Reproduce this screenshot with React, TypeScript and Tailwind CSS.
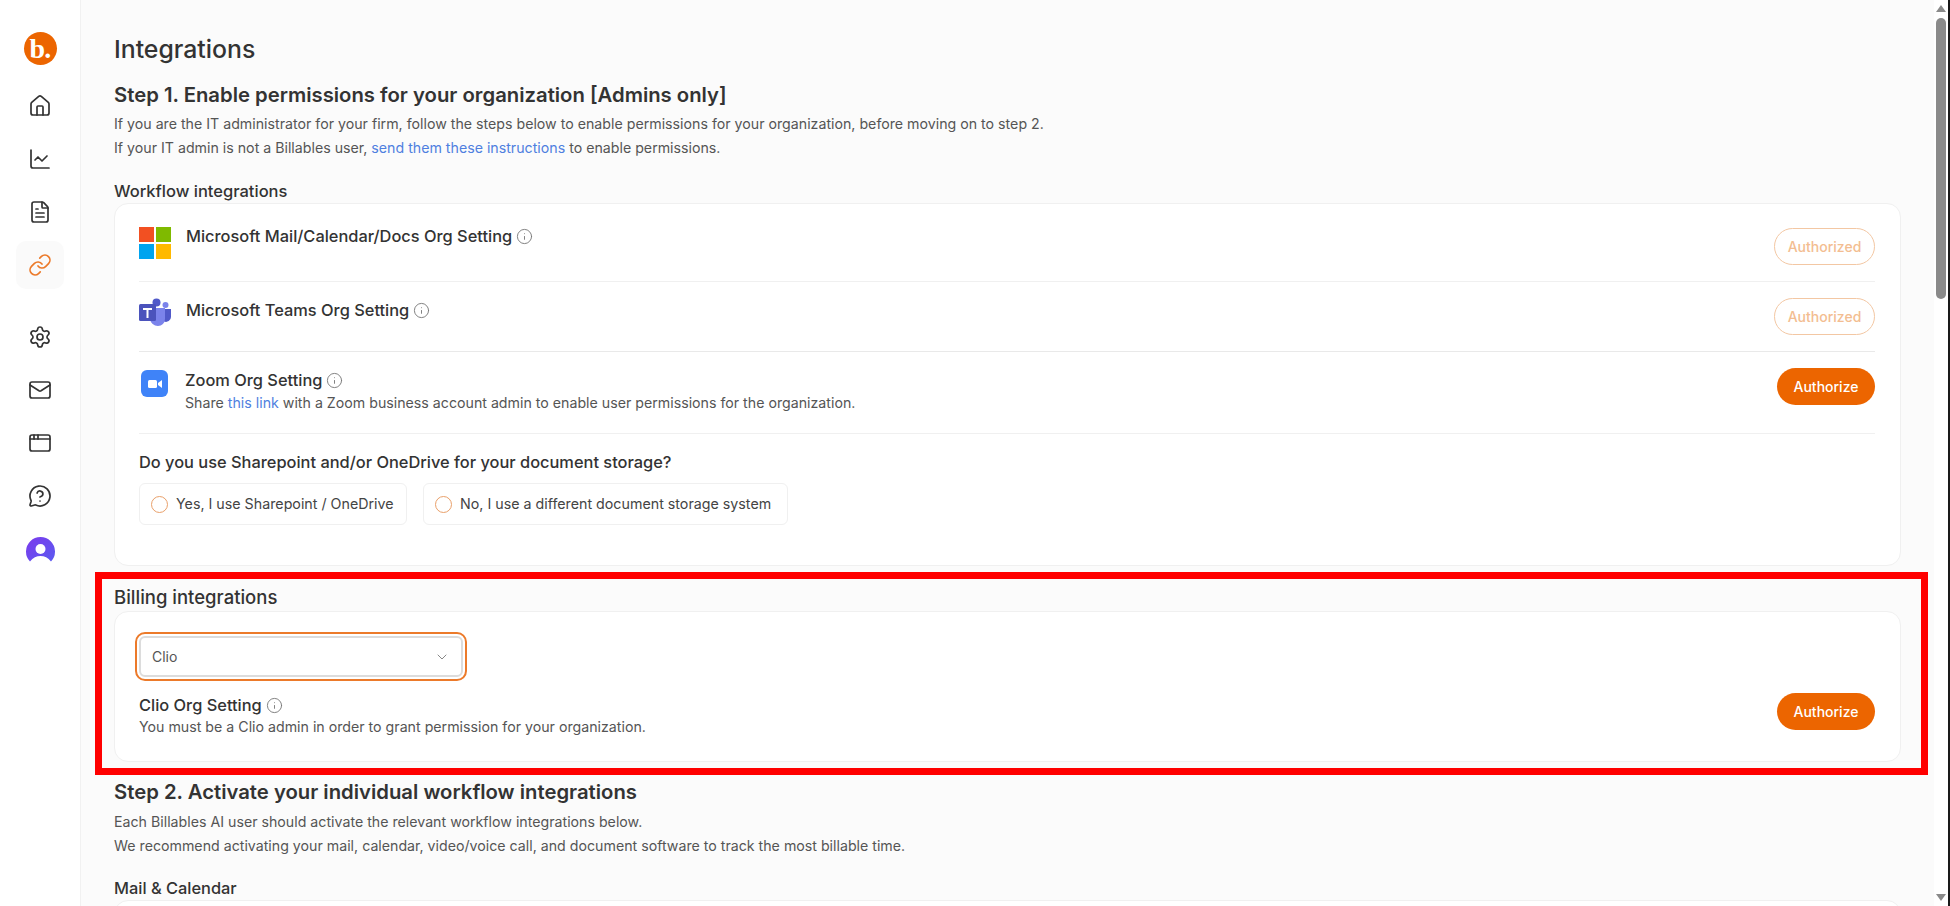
import { House, ChartLine, FileText, Link, Settings, Mail, AppWindow, MessageCircleQuestion, Info, ChevronDown } from "lucide-react";

function InfoDot() {
  return <Info className="ml-[4px] inline-block h-[17px] w-[17px] text-[#777]" strokeWidth={1.3} />;
}

function Title({ children }: { children: React.ReactNode }) {
  return (
    <div className="flex items-center text-[16.4px] leading-6 font-medium text-[#333]">
      {children}
      <InfoDot />
    </div>
  );
}

function Outline() {
  return (
    <div className="flex h-[37px] w-[101px] items-center justify-center rounded-full border border-[#f3c7a3] bg-white text-sm font-medium text-[#f3bd91]">
      Authorized
    </div>
  );
}

function Solid() {
  return (
    <div className="flex h-[37px] w-[98px] items-center justify-center rounded-full bg-[#ec6500] text-sm font-medium text-white">
      Authorize
    </div>
  );
}

function MsLogo() {
  return (
    <div className="grid h-[32px] w-[32px] grid-cols-2 gap-[2px]">
      <div className="bg-[#f25022]" />
      <div className="bg-[#7fba00]" />
      <div className="bg-[#00a4ef]" />
      <div className="bg-[#ffb900]" />
    </div>
  );
}

function TeamsLogo() {
  return (
    <svg width="32" height="28" viewBox="0 0 32 28">
      <circle cx="17.5" cy="4.5" r="4" fill="#5059c9" />
      <circle cx="26.5" cy="7" r="3" fill="#7b83eb" />
      <path d="M21 11h11v8a5 5 0 0 1-7 4.500z" fill="#5059c9" />
      <path d="M11 10h15v11a7 7 0 0 1-7 7 8 8 0 0 1-8-7z" fill="#7b83eb" />
      <rect x="0" y="6" width="17" height="17" rx="1.500" fill="#4b53bc" />
      <path d="M4 10h9v2h-3.500v8h-2v-8H4z" fill="#fff" />
    </svg>
  );
}

function ZoomLogo() {
  return (
    <div className="mt-[2px] ml-[2px] flex h-[27px] w-[27px] items-center justify-center rounded-[6px] bg-[#3f83f8]">
      <svg width="14" height="10" viewBox="0 0 14 10">
        <rect x="0" y="1" width="9" height="8" rx="1.500" fill="#fff" />
        <path d="M10 4l4-3v8l-4-3z" fill="#fff" />
      </svg>
    </div>
  );
}

function Avatar() {
  return (
    <svg width="29" height="26" viewBox="0 0 29 26">
      <defs>
        <linearGradient id="av" x1="0" y1="0" x2="1" y2="1">
          <stop offset="0" stopColor="#7c3aed" />
          <stop offset="1" stopColor="#5b5bf0" />
        </linearGradient>
      </defs>
      <path d="M4 25.500A14.500 14.500 0 1 1 25 25.500C22 21.500 18.500 20 14.500 20S7 21.500 4 25.500z" fill="url(#av)" />
      <circle cx="14.500" cy="13" r="5" fill="#fff" />
    </svg>
  );
}

function NavIcon({ children, active }: { children: React.ReactNode; active?: boolean }) {
  return (
    <div className={`flex h-[48px] w-[48px] items-center justify-center rounded-[10px] ${active ? "bg-[#fafafa]" : ""}`}>
      {children}
    </div>
  );
}

const iconCls = "h-[24px] w-[24px] text-[#333]";

function Sidebar() {
  return (
    <aside className="flex w-[81px] shrink-0 flex-col items-center border-r border-[#f1f1f1] bg-white pt-[32px]">
      <div className="flex h-[33px] w-[33px] items-center justify-center rounded-full bg-[#ec6500] font-['Liberation_Serif',serif] text-[28px] leading-none font-bold tracking-tight text-white">
        b.
      </div>
      <div className="mt-[17px] flex flex-col gap-[5px]">
        <NavIcon><House className={iconCls} strokeWidth={1.7} /></NavIcon>
        <NavIcon><ChartLine className={iconCls} strokeWidth={1.7} /></NavIcon>
        <NavIcon><FileText className={iconCls} strokeWidth={1.7} /></NavIcon>
        <NavIcon active><Link className="h-[24px] w-[24px] text-[#ec7a2a]" strokeWidth={1.7} /></NavIcon>
      </div>
      <div className="mt-[24px] flex flex-col gap-[5px]">
        <NavIcon><Settings className={iconCls} strokeWidth={1.7} /></NavIcon>
        <NavIcon><Mail className={iconCls} strokeWidth={1.7} /></NavIcon>
        <NavIcon><AppWindow className={iconCls} strokeWidth={1.7} /></NavIcon>
        <NavIcon><MessageCircleQuestion className={iconCls} strokeWidth={1.7} /></NavIcon>
        <NavIcon><Avatar /></NavIcon>
      </div>
    </aside>
  );
}

function Radio({ label, width }: { label: string; width: string }) {
  return (
    <div className={`flex h-[42px] items-center gap-[8px] rounded-[6px] border border-[#f0f0f0] bg-white pl-[11px] text-[14.25px] text-[#444] ${width}`}>
      <span className="h-[17px] w-[17px] rounded-full border-[1.5px] border-[#e9a06a]" />
      {label}
    </div>
  );
}

function Scrollbar() {
  return (
    <div className="flex w-[16px] shrink-0 flex-col items-center bg-white pt-[5px] pr-[2px] shadow-[inset_-2px_0_0_#1a1a1a]">
      <div className="h-0 w-0 border-x-[5px] border-b-[7px] border-x-transparent border-b-[#8a8a8a]" />
      <div className="mt-[6px] h-[281px] w-[10px] rounded-full bg-[#8a8a8a]" />
      <div className="mt-auto mb-[5px] h-0 w-0 border-x-[5px] border-t-[7px] border-x-transparent border-t-[#8a8a8a]" />
    </div>
  );
}

export default function App() {
  return (
    <div className="flex h-[906px] w-full overflow-hidden bg-[#fbfbfb] font-['Inter',sans-serif] text-[#333]">
      <Sidebar />
      <main className="relative min-w-0 flex-1 overflow-hidden pt-[32px] pr-[33px] pl-[33px]">
        <h1 className="text-[24.8px] leading-[34px] font-medium text-[#333]">Integrations</h1>
        <h2 className="mt-[15px] text-[20.3px] leading-7 font-semibold text-[#333]">Step 1. Enable permissions for your organization [Admins only]</h2>
        <p className="mt-[3px] text-[14.2px] leading-6 text-[#555]">If you are the IT administrator for your firm, follow the steps below to enable permissions for your organization, before moving on to step 2.</p>
        <p className="text-[14.2px] leading-6 text-[#555]">
          If your IT admin is not a Billables user, <span className="text-[#4f7fe0]">send them these instructions</span> to enable permissions.
        </p>
        <h3 className="mt-[19px] text-[16.5px] leading-6 font-medium text-[#333]">Workflow integrations</h3>

        <section className="h-[363px] rounded-[14px] border border-[#f0f0f0] bg-white pr-[25px] pl-[24px]">
          <div className="flex h-[78px] items-start justify-between border-b border-[#f0f0f0] pt-[23px]">
            <div className="flex items-start gap-[15px]">
              <MsLogo />
              <div className="-mt-[3px]"><Title>Microsoft Mail/Calendar/Docs Org Setting</Title></div>
            </div>
            <div className="mt-[1px]"><Outline /></div>
          </div>
          <div className="flex h-[70px] items-start justify-between border-b border-[#e9e9e9] pt-[16px]">
            <div className="flex items-start gap-[15px]">
              <TeamsLogo />
              <Title>Microsoft Teams Org Setting</Title>
            </div>
            <Outline />
          </div>
          <div className="flex h-[82px] items-start justify-between border-b border-[#f0f0f0] pt-[16px]">
            <div className="flex items-start gap-[17px]">
              <ZoomLogo />
              <div>
                <Title>Zoom Org Setting</Title>
                <p className="mt-[1px] text-[14.2px] leading-5 text-[#555]">
                  Share <span className="text-[#4f7fe0]">this link</span> with a Zoom business account admin to enable user permissions for the organization.
                </p>
              </div>
            </div>
            <Solid />
          </div>
          <p className="mt-[16px] text-[16.4px] leading-6 font-medium text-[#333]">Do you use Sharepoint and/or OneDrive for your document storage?</p>
          <div className="mt-[9px] flex gap-[16px]">
            <Radio label="Yes, I use Sharepoint / OneDrive" width="w-[268px]" />
            <Radio label="No, I use a different document storage system" width="w-[365px]" />
          </div>
        </section>

        <h3 className="mt-[19px] text-[18.5px] leading-6 font-medium text-[#333]">Billing integrations</h3>
        <section className="mt-[2px] flex h-[151px] items-start justify-between rounded-[14px] border border-[#f0f0f0] bg-white pr-[25px] pl-[24px]">
          <div className="flex flex-col">
            <div className="mt-[24px] flex h-[41px] w-[324px] items-center justify-between rounded-[6px] border-2 border-[#dcdcdc] bg-white px-[11px] text-sm text-[#555] outline-2 outline-offset-2 outline-[#ec7a2a]">
              Clio
              <ChevronDown className="h-[16px] w-[16px] text-[#888]" strokeWidth={1.5} />
            </div>
            <div className="mt-[16px]"><Title>Clio Org Setting</Title></div>
            <p className="text-[14.2px] leading-5 text-[#555]">You must be a Clio admin in order to grant permission for your organization.</p>
          </div>
          <div className="mt-[81px]"><Solid /></div>
        </section>

        <h2 className="mt-[16px] text-[20.3px] leading-7 font-semibold text-[#333]">Step 2. Activate your individual workflow integrations</h2>
        <p className="mt-[4px] text-[14.2px] leading-6 text-[#555]">Each Billables AI user should activate the relevant workflow integrations below.</p>
        <p className="text-[14.2px] leading-6 text-[#555]">We recommend activating your mail, calendar, video/voice call, and document software to track the most billable time.</p>
        <h3 className="mt-[18px] text-[16.4px] leading-6 font-medium text-[#333]">Mail &amp; Calendar</h3>
        <section className="h-[120px] rounded-[14px] border border-[#f0f0f0] bg-white" />

        <div className="pointer-events-none absolute top-[572px] left-[14px] h-[203px] w-[1833px] border-[7px] border-[#ff0000]" />
      </main>
      <Scrollbar />
    </div>
  );
}
